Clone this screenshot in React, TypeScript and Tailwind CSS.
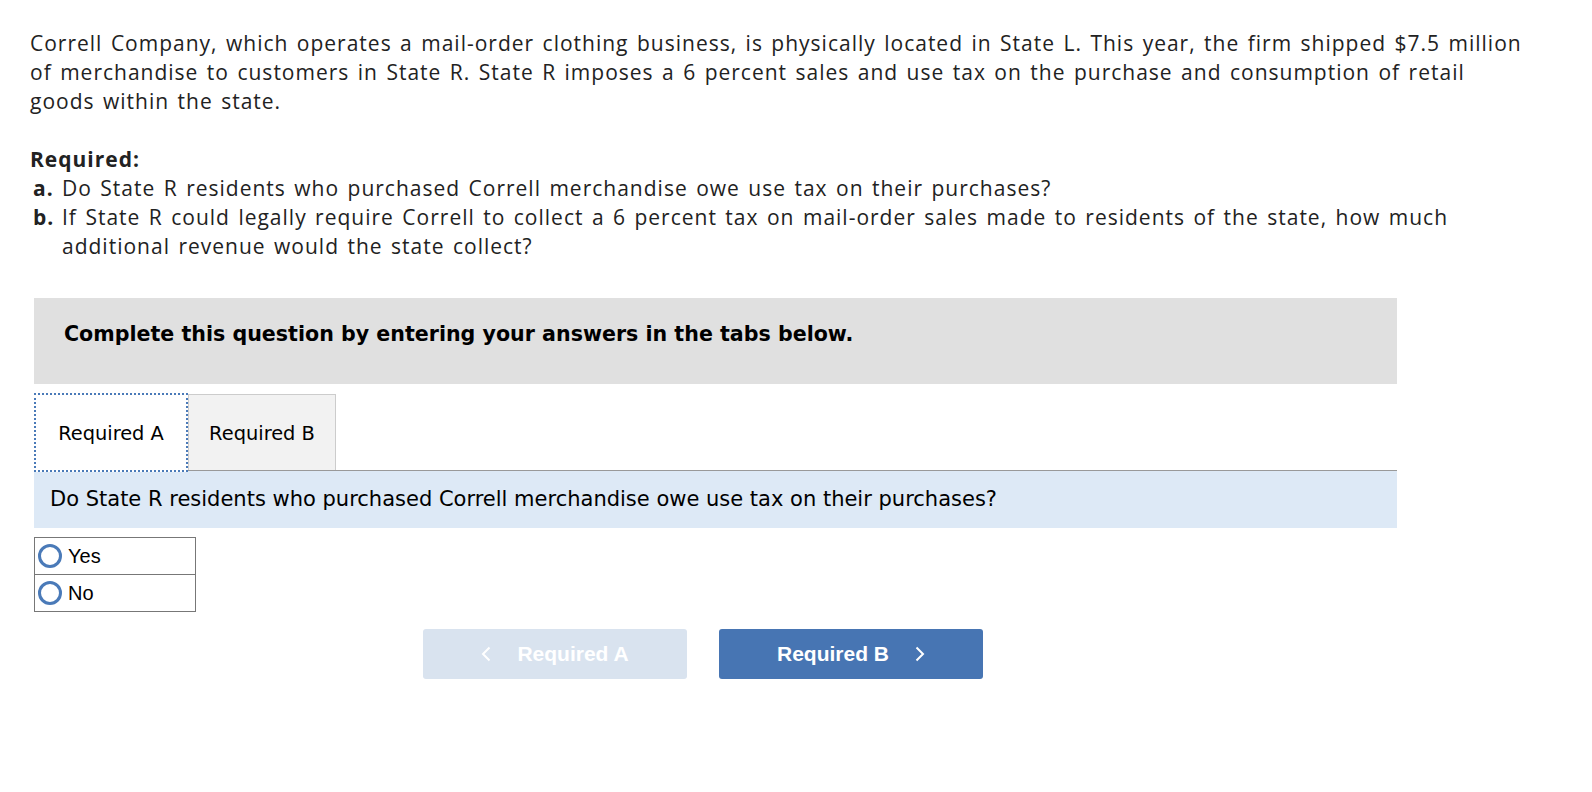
import { useState } from 'react'

const body = { fontFamily: '"Open Sans", "Noto Sans", sans-serif', wordSpacing: '2px' }
const verdana = { fontFamily: '"DejaVu Sans", Verdana, sans-serif' }
const arial = { fontFamily: '"Liberation Sans", Arial, sans-serif' }

function Radio({ label, checked, onClick }: { label: string; checked: boolean; onClick: () => void }) {
  return (
    <button
      type="button"
      onClick={onClick}
      className="flex h-[36px] w-full items-center gap-[6px] pl-[3px] text-left text-[20px] text-black"
      style={arial}
    >
      <span className="flex h-[24px] w-[24px] items-center justify-center rounded-full border-[3px] border-[#4a7ab8]">
        {checked && <span className="h-[10px] w-[10px] rounded-full bg-[#4a7ab8]" />}
      </span>
      {label}
    </button>
  )
}

export default function App() {
  const [answer, setAnswer] = useState<'yes' | 'no' | null>(null)

  return (
    <div className="min-h-[792px] bg-white">
      <div className="pl-[30px] pt-[29px] text-[21px] leading-[29px] tracking-[1px] text-[#222]" style={body}>
        <p>
          Correll Company, which operates a mail-order clothing business, is physically located in State L. This year, the firm shipped $7.5 million
          <br />
          of merchandise to customers in State R. State R imposes a 6 percent sales and use tax on the purchase and consumption of retail
          <br />
          goods within the state.
        </p>

        <p className="mt-[29px] font-bold">Required:</p>
        <ol>
          <li className="flex">
            <span className="w-[32px] shrink-0 pl-[3px] font-bold">a.</span>
            <span>Do State R residents who purchased Correll merchandise owe use tax on their purchases?</span>
          </li>
          <li className="flex">
            <span className="w-[32px] shrink-0 pl-[3px] font-bold">b.</span>
            <span>
              If State R could legally require Correll to collect a 6 percent tax on mail-order sales made to residents of the state, how much
              <br />
              additional revenue would the state collect?
            </span>
          </li>
        </ol>
      </div>

      <div className="ml-[34px] w-[1363px]">
        <div className="mt-[37px] h-[86px] bg-[#e0e0e0] pl-[30px] pt-[24px] text-[20.6px] leading-[24px] font-bold text-black" style={verdana}>
          Complete this question by entering your answers in the tabs below.
        </div>

        <div className="mt-[9px] flex items-end border-b border-[#999]">
          <div
            className="-mb-[2px] flex h-[79px] w-[154px] items-center justify-center border-2 border-dotted border-[#4a7ab8] bg-white pt-[2px] text-[19.4px] text-black"
            style={verdana}
          >
            Required A
          </div>
          <div
            className="flex h-[76px] w-[148px] items-center justify-center border border-b-0 border-[#ccc] bg-[#f2f2f2] pt-[2px] text-[19.4px] text-black"
            style={verdana}
          >
            Required B
          </div>
        </div>

        <div className="flex h-[57px] items-center bg-[#dde9f6] pl-[16px] text-[21px] text-black" style={verdana}>
          Do State R residents who purchased Correll merchandise owe use tax on their purchases?
        </div>

        <div className="mt-[9px] w-[162px] border border-[#777]">
          <Radio label="Yes" checked={answer === 'yes'} onClick={() => setAnswer('yes')} />
          <div className="border-t border-[#777]" />
          <Radio label="No" checked={answer === 'no'} onClick={() => setAnswer('no')} />
        </div>
      </div>

      <div className="mt-[17px] flex gap-[32px] pl-[423px]" style={arial}>
        <button
          type="button"
          disabled
          className="flex h-[50px] w-[264px] items-center justify-center gap-[26px] rounded-[3px] bg-[#d9e3ef] text-[21px] font-bold text-white"
        >
          <svg width="10" height="16" viewBox="0 0 10 16" fill="none" stroke="currentColor" strokeWidth="2">
            <path d="M8.5 1.5 L2 8 L8.5 14.5" />
          </svg>
          Required A
        </button>
        <button
          type="button"
          className="flex h-[50px] w-[264px] items-center justify-center gap-[26px] rounded-[3px] bg-[#4775b3] text-[21px] font-bold text-white"
        >
          Required B
          <svg width="10" height="16" viewBox="0 0 10 16" fill="none" stroke="currentColor" strokeWidth="2">
            <path d="M1.5 1.5 L8 8 L1.5 14.5" />
          </svg>
        </button>
      </div>
    </div>
  )
}
